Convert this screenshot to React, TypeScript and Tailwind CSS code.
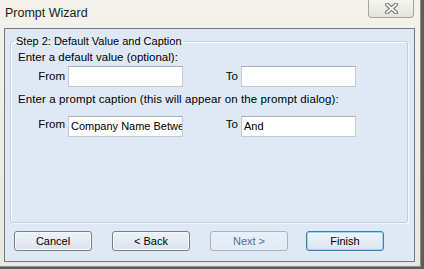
import React from "react";

const body = { fontFamily: '"Liberation Sans", Arial, sans-serif' };

function Input({ value }: { value?: string }) {
  return (
    <div className="w-[115px] h-[21px] bg-white border border-[#c3cad4] border-t-[#a9b1bb] flex items-center pl-[2px] overflow-hidden whitespace-nowrap text-[11px] text-black">
      {value}
    </div>
  );
}

function Btn({ label, kind }: { label: string; kind?: "default" | "disabled" }) {
  const base =
    "w-[78px] h-[20px] rounded-[3px] flex items-center justify-center text-[11px] bg-gradient-to-b ";
  if (kind === "default")
    return (
      <div className={base + "border border-[#3c7fb1] from-[#eef4fa] to-[#dbe6f2] shadow-[inset_0_0_0_1px_#9fd5f2] text-black"}>
        {label}
      </div>
    );
  if (kind === "disabled")
    return (
      <div className={base + "border border-[#aab3bd] from-[#eaf0f7] to-[#e2eaf4] text-[#4d6f9c]"}>
        {label}
      </div>
    );
  return (
    <div className={base + "border border-[#7a7f86] from-[#eef3f9] to-[#dbe3ee] shadow-[inset_0_0_0_1px_#f6f9fc] text-black"}>
      {label}
    </div>
  );
}

export default function App() {
  return (
    <div className="w-[424px] h-[269px] bg-[#5b5e60] overflow-hidden" style={body}>
      <div className="w-[421px] h-[267px] bg-gradient-to-b from-[#f3f2ec] to-[#e9e8e0] flex flex-col border-r border-b border-[#8f8e88]">
        {/* title bar */}
        <div className="h-[28px] flex items-start justify-between">
          <div className="pl-[5px] pt-[5px] text-[12.5px] text-[#1b1b1b] leading-[16px]">Prompt Wizard</div>
          <div className="mr-[6px] w-[46px] h-[18px] rounded-b-[4px] border border-t-0 border-[#a4a4a0] bg-gradient-to-b from-[#f6f6f2] to-[#e4e3dc] flex items-center justify-center">
            <svg width="15" height="11" viewBox="0 0 15 11">
              <path d="M3 1.5 L12 9.5 M12 1.5 L3 9.5" stroke="#6b6e72" strokeWidth="4" strokeLinecap="round" />
              <path d="M3 1.5 L12 9.5 M12 1.5 L3 9.5" stroke="#f4f4f4" strokeWidth="2" strokeLinecap="round" />
            </svg>
          </div>
        </div>
        {/* client */}
        <div className="ml-[4px] w-[411px] h-[234px] bg-[#dfe9f5] border border-[#6f7883] flex flex-col">
          <fieldset className="ml-[5px] mt-[5px] w-[398px] h-[189px] border border-[#c3cfdc] rounded-[3px] shadow-[inset_1px_1px_0_#ffffff,1px_1px_0_#f4f8fc] px-0 pb-0 pt-0 min-w-0">
            <legend className="ml-[3px] px-[2px] text-[11px] text-black leading-[14px]">
              Step 2: Default Value and Caption
            </legend>
            <div className="pl-[7px] text-[11.5px] leading-[14px] text-black mt-[2px]">Enter a default value (optional):</div>
            <div className="flex items-center mt-[2px] text-[11.5px] text-black">
              <div className="w-[54px] text-right">From</div>
              <div className="ml-[3px]"><Input /></div>
              <div className="w-[55px] text-right">To</div>
              <div className="ml-[3px]"><Input /></div>
            </div>
            <div className="pl-[7px] text-[11.5px] leading-[14px] text-black mt-[5px] tracking-[0.1px]">
              Enter a prompt caption (this will appear on the prompt dialog):
            </div>
            <div className="flex items-start mt-[10px] text-[11.5px] text-black">
              <div className="w-[54px] text-right leading-[14px] mt-[1px]">From</div>
              <div className="ml-[3px]"><Input value="Company Name Between" /></div>
              <div className="w-[55px] text-right leading-[14px] mt-[1px]">To</div>
              <div className="ml-[3px]"><Input value="And" /></div>
            </div>
          </fieldset>
          <div className="flex mt-[8px] ml-[9px] gap-[20px]">
            <Btn label="Cancel" />
            <Btn label="< Back" />
            <Btn label="Next >" kind="disabled" />
            <div className="-ml-[2px]"><Btn label="Finish" kind="default" /></div>
          </div>
        </div>
      </div>
    </div>
  );
}
